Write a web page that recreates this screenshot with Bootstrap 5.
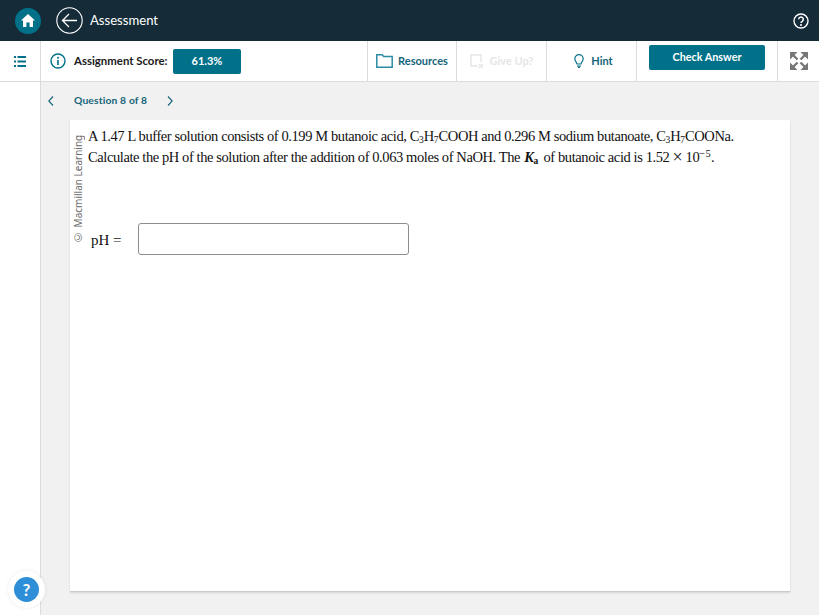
<!DOCTYPE html>
<html lang="en"><head><meta charset="utf-8"><title>Assessment</title>
<link href="https://cdn.jsdelivr.net/npm/bootstrap@5.3.0/dist/css/bootstrap.min.css" rel="stylesheet">
<style>
html,body{height:100%;overflow:hidden}
body{font-family:Lato,"Noto Sans",sans-serif;background:#f1f1f1;color:#1a1a1a;width:819px;height:615px;position:relative}
.top-bar{height:41px;background:#152c38;color:#fff}
.home-dot{width:26px;height:26px;border-radius:50%;background:#007189;margin-left:15px}
.back-dot{width:27px;height:27px;margin-left:15px}
.top-title{font-size:13.1px;margin-left:7px;line-height:1}
.help-top{margin-right:10px}
.tool-bar{height:41px;background:#fff;border-bottom:1px solid #dcdcdc}
.tool-cell{height:40px;border-right:1px solid #dcdcdc;flex:none}
.cell-list{width:41px}
.cell-score{width:327px;padding-left:9px}
.score-label{width:95px;font-size:11.4px;font-weight:700;margin-left:8px;margin-right:4px;white-space:nowrap}
.score-box{width:68px;height:25px;background:#007189;color:#fff;font-size:11px;font-weight:700;border-radius:2px;margin-top:1px}
.cell-res{width:89px;gap:5px}
.cell-give{width:90px;gap:6px}
.cell-hint{width:90px;gap:7px;padding-left:4px}
.tool-text{font-size:11px;font-weight:700;color:#15647a}
.tool-muted{color:#e6e6e6}
.cell-check{width:141px;padding:4px 12px 0}
.btn.check-btn{width:116px;height:25px;background:#007189;color:#fff;font-size:10.8px;font-weight:700;padding:0;border:0;border-radius:2px;display:flex;align-items:center;justify-content:center}
.cell-full{width:41px;border:0}
.page-row{height:533px}
.rail{width:41px;background:#fff;border-right:1px solid #dcdcdc;flex:none}
.main-area{padding:0 29px;width:778px}
.q-nav{height:37px;margin-bottom:1px;font-size:10.3px;font-weight:700;color:#15647a;letter-spacing:.15px}
.q-label{width:72px;margin:0 21px 0 20px;white-space:nowrap}
.q-prev{margin-left:-22px}
.q-card{height:472px;width:720px;background:#fff;border-bottom:1px solid #c9c9c9;box-shadow:0 1px 2px rgba(0,0,0,.12);position:relative;font-family:"Liberation Serif",serif;color:#111}
.q-text{font-size:14.5px;line-height:21px;padding:6px 0 0 18px;white-space:nowrap;letter-spacing:-.41px}
.q-text sub,.q-text sup{font-size:9.5px;line-height:0;letter-spacing:0}
.q-text sup{font-size:10.5px;letter-spacing:.3px}
.ka-mark{margin:0 2px 0 1px}
.times-sign{font-size:18px;line-height:0;vertical-align:-1px}
.credit{position:absolute;left:3px;top:20px;height:104px;writing-mode:vertical-rl;transform:rotate(180deg);font-family:"Noto Sans",sans-serif;font-size:10px;line-height:11px;color:#6b6b6b;text-align:left;white-space:nowrap}
.ph-row{padding-left:21px;margin-top:55px;font-size:15px}
.ph-text{margin-top:3px}
.ph-box{width:271px;height:32px;border:1px solid #8d8d8d;border-radius:3px;margin-left:16px;background:#fff}
.help-float{position:absolute;left:8px;top:571px;width:37px;height:37px;border-radius:50%;background:#fff;box-shadow:0 0 4px rgba(0,0,0,.08)}
.help-inner{width:25px;height:25px;border-radius:50%;background:#2e8fd8;color:#fff;font-weight:700;font-size:17px;line-height:1}
</style></head>
<body>
<header class="top-bar d-flex align-items-center">
  <div class="home-dot d-flex align-items-center justify-content-center">
    <svg width="14" height="13" viewBox="0 0 14 13"><path d="M7 0 0 6.4h2V13h3.4V8.6h3.2V13H12V6.4h2z" fill="#fff"/></svg>
  </div>
  <svg class="back-dot" viewBox="0 0 27 27"><circle cx="13.5" cy="13.5" r="12.7" fill="none" stroke="#fff" stroke-width="1.1"/><path d="M21 13.5H7M13 7l-6.500 6.500L13 20" fill="none" stroke="#fff" stroke-width="1.300"/></svg>
  <span class="top-title">Assessment</span>
  <svg class="help-top ms-auto" width="16" height="16" viewBox="0 0 16 16"><circle cx="8" cy="8" r="7" fill="none" stroke="#fff" stroke-width="1.400"/><path d="M5.700 6.300a2.300 2.300 0 1 1 3.500 2c-.8.500-1.200.9-1.200 1.700" fill="none" stroke="#fff" stroke-width="1.500"/><circle cx="8" cy="12" r="1" fill="#fff"/></svg>
</header>
<div class="tool-bar d-flex">
  <div class="tool-cell cell-list d-flex align-items-center justify-content-center">
    <svg width="12" height="11" viewBox="0 0 12 11" fill="#007189"><rect x="0" y="0" width="2" height="2"/><rect x="3.500" y="0" width="8.500" height="2"/><rect x="0" y="4.500" width="2" height="2"/><rect x="3.500" y="4.500" width="8.500" height="2"/><rect x="0" y="9" width="2" height="2"/><rect x="3.500" y="9" width="8.500" height="2"/></svg>
  </div>
  <div class="tool-cell cell-score d-flex align-items-center">
    <svg width="16" height="16" viewBox="0 0 16 16"><circle cx="8" cy="8" r="7" fill="none" stroke="#007189" stroke-width="1.400"/><rect x="7.200" y="7" width="1.600" height="5" fill="#007189"/><circle cx="8" cy="4.800" r="1" fill="#007189"/></svg>
    <span class="score-label">Assignment Score:</span>
    <span class="score-box d-flex align-items-center justify-content-center">61.3%</span>
  </div>
  <div class="tool-cell cell-res d-flex align-items-center justify-content-center">
    <svg width="17" height="14" viewBox="0 0 17 14"><path d="M.8.800h5.400l1.500 1.700h8.500v10.700H.8z" fill="none" stroke="#2a8ba3" stroke-width="1.500"/></svg>
    <span class="tool-text">Resources</span>
  </div>
  <div class="tool-cell cell-give d-flex align-items-center justify-content-center">
    <svg width="14" height="14" viewBox="0 0 14 14"><path d="M11 8V1H1v11h7M9 10l4 4M13 10l-4 4" fill="none" stroke="#e6e6e6" stroke-width="1.500"/></svg>
    <span class="tool-text tool-muted">Give Up?</span>
  </div>
  <div class="tool-cell cell-hint d-flex align-items-center justify-content-center">
    <svg width="10" height="14" viewBox="0 0 10 14"><path d="M3 10C2.600 8 .8 7 .8 4.800a4.200 4.200 0 0 1 8.400 0C9.200 7 7.400 8 7 10zM3.200 12.200h3.600M4 13.500h2" fill="none" stroke="#007189" stroke-width="1.200"/></svg>
    <span class="tool-text">Hint</span>
  </div>
  <div class="tool-cell cell-check">
    <button type="button" class="btn check-btn">Check Answer</button>
  </div>
  <div class="tool-cell cell-full d-flex align-items-center justify-content-center">
    <svg width="18" height="18" viewBox="0 0 18 18"><g fill="#777"><path d="M0 0h7.500L0 7.500zM18 0v7.500L10.500 0zM0 18v-7.500L7.500 18zM18 18h-7.500l7.500-7.500z"/></g><path d="M3 3l4.500 4.500M15 3l-4.500 4.500M3 15l4.500-4.500M15 15l-4.500-4.500" stroke="#777" stroke-width="2.400" fill="none"/></svg>
  </div>
</div>
<div class="page-row d-flex">
  <aside class="rail"></aside>
  <main class="main-area">
    <div class="q-nav d-flex align-items-center">
      <svg class="q-prev" width="6" height="10" viewBox="0 0 6 10"><path d="M5 .5.800 5 5 9.500" fill="none" stroke="#15647a" stroke-width="1.100"/></svg>
      <span class="q-label">Question 8 of 8</span>
      <svg width="6" height="10" viewBox="0 0 6 10"><path d="M1 .5 5.200 5 1 9.500" fill="none" stroke="#15647a" stroke-width="1.100"/></svg>
    </div>
    <section class="q-card">
      <div class="credit">© Macmillan Learning</div>
      <div class="q-text">A 1.47 L buffer solution consists of 0.199 M butanoic acid, C<sub>3</sub>H<sub>7</sub>COOH and 0.296 M sodium butanoate, C<sub>3</sub>H<sub>7</sub>COONa.<br>Calculate the pH of the solution after the addition of 0.063 moles of NaOH. The <b class="ka-mark"><i>K</i><sub>a</sub></b> of butanoic acid is 1.52 <span class="times-sign">×</span> 10<sup>−5</sup>.</div>
      <div class="ph-row d-flex align-items-center"><span class="ph-text">pH =</span><div class="ph-box"></div></div>
    </section>
  </main>
</div>
<div class="help-float d-flex align-items-center justify-content-center"><div class="help-inner d-flex align-items-center justify-content-center">?</div></div>
<script src="https://cdn.jsdelivr.net/npm/bootstrap@5.3.0/dist/js/bootstrap.bundle.min.js"></script>
</body></html>
